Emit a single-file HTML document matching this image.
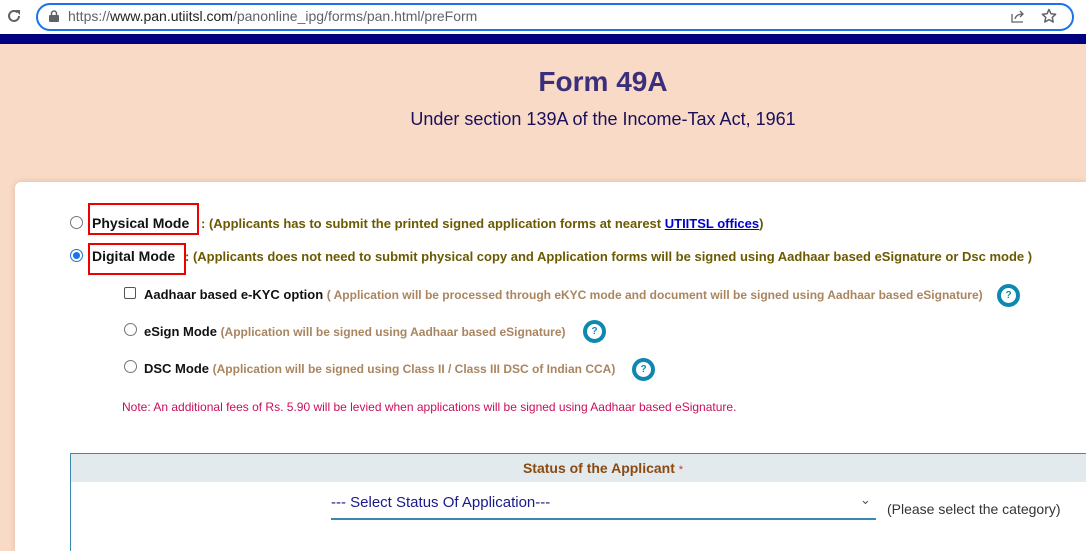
<!DOCTYPE html>
<html style="width:1086px;height:551px;overflow:hidden"><head><meta charset="utf-8"><style>
*{margin:0;padding:0;box-sizing:border-box}
body{width:1086px;height:551px;overflow:hidden;background:#f8dac6;font-family:"Liberation Sans",Arial,sans-serif;position:relative}
.abs{position:absolute;white-space:nowrap}
.top{position:absolute;left:0;top:0;width:1086px;height:34px;background:#fff}
.url{position:absolute;left:36px;top:3px;width:1038px;height:28px;border:2px solid #1a73e8;border-radius:14px}
.nav{position:absolute;left:0;top:34px;width:1086px;height:10px;background:#000080}
.card{position:absolute;left:15px;top:182px;width:1071px;height:369px;background:#fff;border-radius:6px 0 0 0;box-shadow:0 0 6px rgba(180,120,90,.3)}
.radio{position:absolute;width:13px;height:13px;border:1px solid #767676;border-radius:50%;background:#fff}
.radio.on{border:1px solid #1a73e8}
.radio.on::after{content:"";position:absolute;left:2px;top:2px;width:7px;height:7px;border-radius:50%;background:#1a73e8}
.box{position:absolute;border:2px solid #e00}
.olive{color:#6b5a00;font-weight:bold;font-size:13px}
.tan{color:#a98560;font-weight:bold;font-size:12px}
.lbl{color:#111;font-weight:bold;font-size:13px}
.q{position:absolute;width:23px;height:23px;border-radius:50%;border:4px solid #0e88b0;background:#fff;color:#0e88b0;font-size:10px;font-weight:bold;text-align:center;line-height:15px}
</style></head><body>
<div class="top"></div>
<svg class="abs" style="left:6px;top:8px" width="16" height="16" viewBox="0 0 16 16"><path d="M13 8a5 5 0 1 1-1.5-3.6" fill="none" stroke="#5f6368" stroke-width="2"/><path d="M9 2h5v5z" fill="#5f6368"/></svg>
<div class="url"></div>
<svg class="abs" style="left:49px;top:10px" width="10" height="12" viewBox="0 0 10 12"><rect x="0" y="5" width="10" height="7" rx="1" fill="#5f6368"/><path d="M2.5 5V3.5a2.5 2.5 0 0 1 5 0V5" fill="none" stroke="#5f6368" stroke-width="1.5"/></svg>
<div class="abs" style="left:68px;top:8px;font-size:14px;color:#5f6368">https://<span style="color:#202124">www.pan.utiitsl.com</span>/panonline_ipg/forms/pan.html/preForm</div>
<svg class="abs" style="left:1010px;top:8px" width="16" height="16" viewBox="0 0 16 16" fill="none" stroke="#5f6368" stroke-width="1.3"><path d="M2 6v8h11"/><path d="M5 11c1-4 4-5 8-5M10 3l3 3-3 3"/></svg>
<svg class="abs" style="left:1041px;top:8px" width="16" height="16" viewBox="0 0 16 16"><path d="M8 1.5l2 4.3 4.6.5-3.4 3.1 1 4.6L8 11.6 3.8 14l1-4.6L1.4 6.3 6 5.8z" fill="none" stroke="#5f6368" stroke-width="1.5" stroke-linejoin="round"/></svg>
<div class="nav"></div>
<div class="abs" style="left:0;width:1206px;top:66px;text-align:center;font-size:28px;font-weight:bold;color:#3a2f7a">Form 49A</div>
<div class="abs" style="left:0;width:1206px;top:109px;text-align:center;font-size:18px;color:#1a0f5a">Under section 139A of the Income-Tax Act, 1961</div>
<div class="card"></div>
<div class="radio" style="left:70px;top:216px"></div>
<div class="box" style="left:88px;top:203px;width:111px;height:32px"></div>
<div class="abs lbl" style="left:92px;top:215px;font-size:14px">Physical Mode</div>
<div class="abs olive" style="left:201px;top:216px">: (Applicants has to submit the printed signed application forms at nearest <span style="color:#00c;text-decoration:underline">UTIITSL offices</span>)</div>
<div class="radio on" style="left:70px;top:249px"></div>
<div class="box" style="left:88px;top:243px;width:98px;height:32px"></div>
<div class="abs lbl" style="left:92px;top:248px;font-size:14px">Digital Mode</div>
<div class="abs olive" style="left:185px;top:249px">: (Applicants does not need to submit physical copy and Application forms will be signed using Aadhaar based eSignature or Dsc mode )</div>
<div class="abs" style="left:124px;top:287px;width:12px;height:12px;border:1px solid #555;border-radius:2px"></div>
<div class="abs lbl" style="left:144px;top:287px">Aadhaar based e-KYC option <span class="tan">( Application will be processed through eKYC mode and document will be signed using Aadhaar based eSignature)</span></div>
<div class="q" style="left:997px;top:284px">?</div>
<div class="radio" style="left:124px;top:323px"></div>
<div class="abs lbl" style="left:144px;top:324px">eSign Mode <span class="tan">(Application will be signed using Aadhaar based eSignature)</span></div>
<div class="q" style="left:583px;top:320px">?</div>
<div class="radio" style="left:124px;top:360px"></div>
<div class="abs lbl" style="left:144px;top:361px">DSC Mode <span class="tan">(Application will be signed using Class II / Class III DSC of Indian CCA)</span></div>
<div class="q" style="left:632px;top:358px">?</div>
<div class="abs" style="left:122px;top:400px;font-size:12px;color:#c8105a">Note: An additional fees of Rs. 5.90 will be levied when applications will be signed using Aadhaar based eSignature.</div>
<div class="abs" style="left:70px;top:453px;width:1030px;height:100px;border:1px solid #3a8ab0;background:#fff"></div>
<div class="abs" style="left:71px;top:454px;width:1030px;height:28px;background:#e3eaee"></div>
<div class="abs" style="left:0;width:1206px;top:460px;text-align:center;font-size:14px;font-weight:bold;color:#8a4a10">Status of the Applicant <span style="font-weight:normal;color:#c33;font-size:11px">*</span></div>
<div class="abs" style="left:331px;top:494px;font-size:15px;color:#1a1a8a">--- Select Status Of Application---</div>
<div class="abs" style="left:860px;top:492px;font-size:13px;color:#555">⌄</div>
<div class="abs" style="left:331px;top:518px;width:545px;height:2px;background:#3a8ab0"></div>
<div class="abs" style="left:887px;top:501px;font-size:14px;color:#333">(Please select the category)</div>
</body></html>
